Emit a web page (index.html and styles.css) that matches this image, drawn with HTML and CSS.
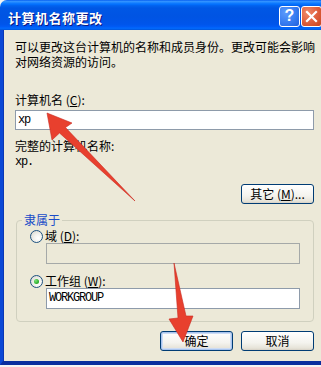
FILE: index.html
```html
<!DOCTYPE html>
<html lang="zh-CN">
<head>
<meta charset="utf-8">
<title>计算机名称更改</title>
<link rel="stylesheet" href="styles.css">
</head>
<body>
<div class="window">
  <div class="titlebar">
    <span class="title">计算机名称更改</span>
    <div class="caption-buttons">
      <span class="cap-btn help">?</span>
      <span class="cap-btn close"><svg width="13" height="13" viewBox="0 0 13 13"><path d="M2 2 L11 11 M11 2 L2 11" stroke="#fff" stroke-width="2.2" stroke-linecap="square"/></svg></span>
    </div>
  </div>
  <div class="client">
    <p class="intro">可以更改这台计算机的名称和成员身份。更改可能会影响<br>对网络资源的访问。</p>
    <div class="field-label">计算机名 (<u>C</u>):</div>
    <div class="textbox">xp</div>
    <div class="field-label full">完整的计算机名称:</div>
    <div class="fullname">xp.</div>
    <div class="more-row"><button class="btn">其它 (<u>M</u>)...</button></div>
    <fieldset class="group">
      <legend>隶属于</legend>
      <div class="radio-row"><span class="radio"></span>域 (<u>D</u>):</div>
      <div class="textbox sub disabled"></div>
      <div class="radio-row second"><span class="radio checked"></span>工作组 (<u>W</u>):</div>
      <div class="textbox sub">WORKGROUP</div>
    </fieldset>
    <div class="actions"><button class="btn default">确定</button><button class="btn">取消</button></div>
  </div>
  <svg class="annotations" width="329" height="365" viewBox="0 0 329 365">
    <polygon points="47,113 72,123 65.5,127.5 135,201 59.5,133 52,140" fill="#E8402E" stroke="#C92A20" stroke-width="0.6" stroke-linejoin="round"/>
    <polygon points="174,263 186,316 193,316 183,342 169,319 178,318" fill="#E8402E" stroke="#C92A20" stroke-width="0.6" stroke-linejoin="round"/>
  </svg>
</div>
</body>
</html>
```
FILE: styles.css
```css
html, body {
  margin: 0;
  padding: 0;
}
body {
  width: 321px;
  height: 367px;
  overflow: hidden;
  background: #f4f4f4;
  font-family: "Noto Sans CJK SC", sans-serif;
  font-size: 12px;
  color: #000;
}
.window {
  position: relative;
  width: 329px;
  height: 365px;
  display: flex;
  flex-direction: column;
}
.titlebar {
  flex: none;
  height: 30px;
  box-sizing: border-box;
  border-radius: 7px 7px 0 0;
  background: linear-gradient(to bottom,
    #0058EE 0%, #3593FF 4%, #288EFF 7%, #127DFF 10%, #036FFC 15%,
    #0262EE 19%, #0057E5 27%, #0054E3 56%, #0055EB 81%, #005BF5 89%,
    #026AFE 94%, #0062EF 97%, #0052D6 100%);
  display: flex;
  align-items: center;
  padding: 0 7px 0 8px;
}
.title {
  flex: 1;
  color: #fff;
  font-weight: bold;
  font-size: 13px;
  letter-spacing: 0.5px;
  margin-top: 4px;
  text-shadow: 1px 1px 0 #0A1883;
}
.caption-buttons {
  display: flex;
  gap: 1px;
  margin-top: 2px;
}
.cap-btn {
  width: 21px;
  height: 21px;
  box-sizing: border-box;
  border: 1px solid #fff;
  border-radius: 3px;
  display: flex;
  align-items: center;
  justify-content: center;
}
.help {
  background: radial-gradient(circle at 30% 30%, #5C9BFB 0%, #3A7FF2 50%, #2160DC 100%);
  color: #fff;
  font-family: "Liberation Sans", sans-serif;
  font-weight: bold;
  font-size: 16px;
  line-height: 1;
}
.close {
  background: radial-gradient(circle at 30% 30%, #EE8A6A 0%, #E0613F 50%, #C8441E 100%);
}
.client {
  flex: 1;
  background: #ECE9D8;
  border-left: 3px solid #0B48D6;
  border-right: 3px solid #0B48D6;
  border-bottom: 4px solid #0A2E9E;
  padding: 9px 12px 0 12px;
  box-shadow: inset 1px 0 0 #0A37B4;
}
.intro {
  margin: 0;
  line-height: 15px;
  white-space: nowrap;
}
.field-label {
  margin-top: 23px;
  line-height: 15px;
}
.field-label.full {
  margin-top: 8px;
}
u {
  text-decoration: underline;
  text-underline-offset: 1px;
}
.textbox {
  margin-top: 3px;
  height: 20px;
  box-sizing: border-box;
  border: 1px solid #8E9BAA;
  background: #fff;
  font-family: "Liberation Mono", monospace;
  font-size: 12px;
  letter-spacing: -1.2px;
  line-height: 18px;
  padding-left: 2px;
}
.fullname {
  margin-top: 2px;
  font-family: "Liberation Mono", monospace;
  font-size: 12px;
  letter-spacing: -1.2px;
  line-height: 15px;
}
.more-row {
  display: flex;
  justify-content: flex-end;
  margin-top: 14px;
}
.btn {
  width: 73px;
  height: 20px;
  box-sizing: border-box;
  margin: 0;
  padding: 0;
  border: 1px solid #003C74;
  border-radius: 3px;
  background: linear-gradient(to bottom, #FFFFFF 0%, #F4F3EE 60%, #E6E3D8 90%, #D6D0C5 100%);
  font-family: "Noto Sans CJK SC", sans-serif;
  font-size: 12px;
  line-height: 16px;
  color: #000;
}
.btn.default {
  box-shadow: inset 0 0 0 1px #A8C4EE, inset 0 0 0 2px #CDDCF4;
}
.group {
  margin: 9px 0 0 1px;
  padding: 0 13px 12px 13px;
  border: 1px solid #D0D0BF;
  border-radius: 4px;
  min-width: 0;
}
.group legend {
  margin-left: -8px;
  padding: 0 2px;
  line-height: 14px;
  color: #1A4CC8;
}
.radio-row {
  display: flex;
  align-items: center;
  height: 14px;
  margin-top: 2px;
  line-height: 14px;
}
.radio-row.second {
  margin-top: 10px;
}
.radio {
  width: 13px;
  height: 13px;
  box-sizing: border-box;
  border: 1px solid #1C5180;
  border-radius: 50%;
  background: radial-gradient(circle at 65% 65%, #FFFFFF 0%, #F2F2EE 40%, #D4D2C8 100%);
  margin-right: 2px;
  display: flex;
  align-items: center;
  justify-content: center;
}
.radio.checked::after {
  content: "";
  width: 5px;
  height: 5px;
  border-radius: 50%;
  background: radial-gradient(circle at 35% 35%, #7BE37A 0%, #31B12F 60%, #1B8E1B 100%);
}
.textbox.sub {
  margin: 0 0 0 16px;
  width: 254px;
  height: 21px;
  line-height: 19px;
}
.textbox.disabled {
  background: #ECE9D8;
  border-color: #A5A9A8;
}
.actions {
  display: flex;
  justify-content: flex-end;
  gap: 8px;
  margin-top: 9px;
}
.annotations {
  position: absolute;
  left: 0;
  top: 0;
  pointer-events: none;
}
```
